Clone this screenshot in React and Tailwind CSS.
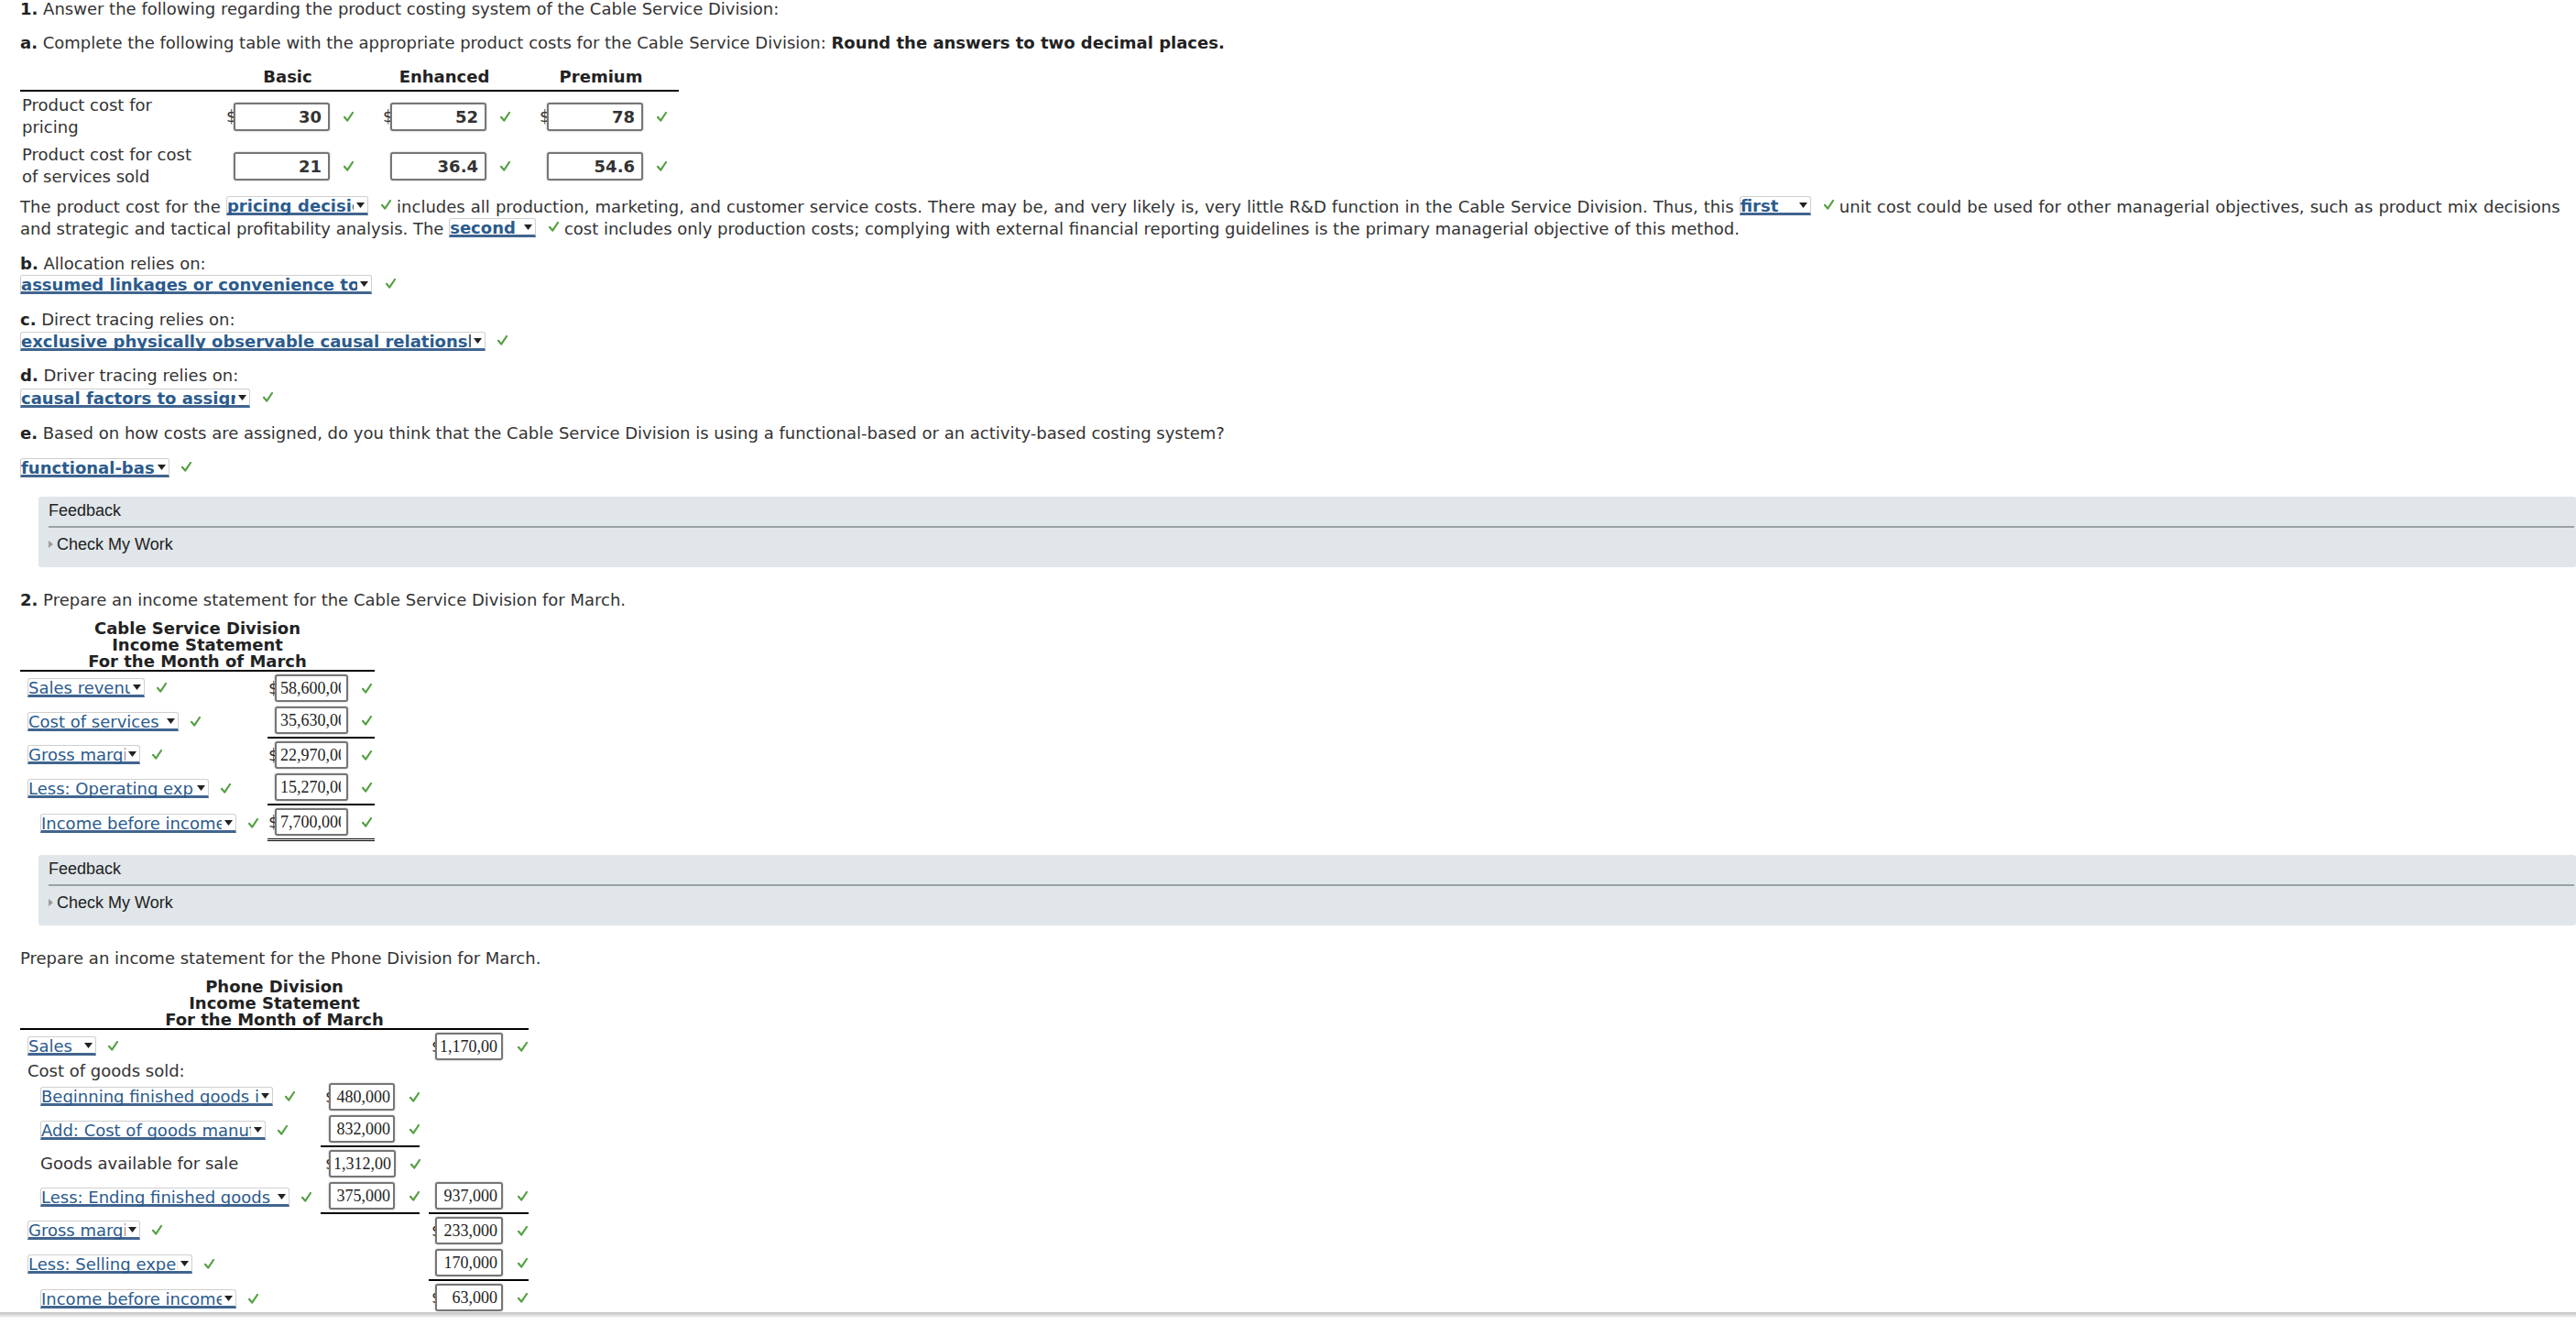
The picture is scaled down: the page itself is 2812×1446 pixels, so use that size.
import React from 'react';

const verdana = "font-['DejaVu_Sans',Verdana,sans-serif]";
const arial = "font-['Liberation_Sans',Arial,sans-serif]";
const times = "font-['Liberation_Serif','Times_New_Roman',serif]";

const Check = ({ className = '' }) => (
  <svg viewBox="0 0 11 11" className={`inline-block w-[11px] h-[11px] shrink-0 ${className}`}>
    <path d="M1 5.8 L4.2 9.6 L10 1" fill="none" stroke="#55a043" strokeWidth="2.2" strokeLinecap="round" strokeLinejoin="round" />
  </svg>
);

const Arrow = () => (
  <svg viewBox="0 0 9 6" className="w-[9px] h-[6px] mt-[6px] mx-[3px] shrink-0">
    <path d="M0 0 H9 L4.5 6 Z" fill="#222" />
  </svg>
);

// select-like answer box with blue underline
const Drop = ({ text, w, bold = false }) => (
  <span className={`inline-flex align-top h-[21px] ${w} border border-[#cfcfcf] border-b-[3px] border-b-[#41658f] rounded-t-[3px] bg-white`}>
    <span className={`flex-1 min-w-0 h-[20px] overflow-hidden whitespace-nowrap leading-[20px] text-[#2b5b8d] ${bold ? 'font-bold' : ''}`}>{text}</span>
    <Arrow />
  </span>
);

const Feedback = ({ className = '' }) => (
  <div className={`ml-[20px] rounded-[3px] bg-[#e0e6e9] pl-[11px] pr-[2px] pt-[5px] pb-[15px] ${arial} text-[18px] text-[#222] ${className}`}>
    <div className="leading-[20px] pb-[7px] border-b-2 border-[#9aa1a4]">Feedback</div>
    <div className="mt-[8px] leading-[20px] flex items-center">
      <svg viewBox="0 0 5 8" className="w-[5px] h-[8px] mr-[4px]">
        <path d="M0 0 L5 4 L0 8 Z" fill="#9a9a9a" />
      </svg>
      Check My Work
    </div>
  </div>
);

const CostBox = ({ value, dollar }) => (
  <div className="w-[171px] shrink-0 flex items-center">
    <span className="w-[8px]">{dollar ? '$' : ''}</span>
    <div className="relative w-[105px] h-[31px] border-2 border-[#767676] rounded-[3px] bg-white shadow-[0_0_2px_rgba(0,0,0,0.35)] text-right pr-[7px] font-bold leading-[27px]">
      {value}
    </div>
    <Check className="ml-[15px]" />
  </div>
);

const cable = { cw: 'w-[117px]', pl: 'pl-[1px]', ds: 'w-[7px]', bw: 'w-[80px]', ip: 'ml-[4px] mr-[6px]', cm: 'ml-[15px]' };
const phoneMid = { cw: 'w-[108px]', pl: 'pl-[5px]', ds: 'w-[4px]', bw: 'w-[73px]', ip: 'ml-[3px] mr-[3px]', cm: 'ml-[16px]' };
const phoneRight = { cw: 'w-[109px]', pl: 'pl-[3px]', ds: 'w-[4px]', bw: 'w-[74px]', ip: 'ml-[3px] mr-[4px]', cm: 'ml-[16px]' };

const Amt = ({ s, value, dollar, line }) => {
  let edge = 'pb-[2px]';
  if (line === 'single') edge = 'pb-[3px] border-b-2 border-black';
  if (line === 'double') edge = 'pb-[3px] border-b-[3px] border-double border-black';
  return (
    <div className={`${s.cw} ${s.pl} shrink-0 pt-[3px] ${edge}`}>
      {value ? (
        <div className="flex items-center">
          <span className={s.ds}>{dollar ? '$' : ''}</span>
          <div className={`relative ${s.bw} h-[30px] border-2 border-[#767676] rounded-[3px] bg-white shadow-[0_0_2px_rgba(0,0,0,0.35)]`}>
            <div className={`overflow-hidden whitespace-nowrap text-right ${times} text-[18px] leading-[26px] text-[#222] ${s.ip}`}>{value}</div>
          </div>
          <Check className={s.cm} />
        </div>
      ) : (
        <div className="h-[30px]" />
      )}
    </div>
  );
};

const Label = ({ w, indent, children }) => (
  <div className={`${w} shrink-0 flex items-center ${indent ? 'pl-[22px]' : 'pl-[8px]'}`}>{children}</div>
);

const DropCheck = ({ text, w }) => (
  <>
    <Drop text={text} w={w} />
    <Check className="ml-[13px]" />
  </>
);

const Title = ({ w, name }) => (
  <div className={`${w} border-b-2 border-black text-center font-bold leading-[18px] text-[#222]`}>
    <div>{name}</div>
    <div>Income Statement</div>
    <div>For the Month of March</div>
  </div>
);

export default function App() {
  return (
    <div className={`${verdana} text-[18px] leading-[24px] text-[#333] bg-white min-h-screen pl-[22px] pb-[60px]`}>
      <div className="-mt-[2px] whitespace-nowrap">
        <b className="text-[#222]">1.</b> Answer the following regarding the product costing system of the Cable Service Division:
      </div>
      <div className="mt-[13px] whitespace-nowrap">
        <b className="text-[#222]">a.</b> Complete the following table with the appropriate product costs for the Cable Service Division: <b className="text-[#222]">Round the answers to two decimal places.</b>
      </div>

      {/* product cost table */}
      <div className="w-[719px]">
        <div className="mt-[13px] flex pb-[2px] border-b-2 border-black font-bold text-[#222]">
          <div className="w-[225px] shrink-0" />
          <div className="w-[171px] shrink-0"><span className="block w-[134px] text-center">Basic</span></div>
          <div className="w-[171px] shrink-0"><span className="block w-[134px] text-center">Enhanced</span></div>
          <div className="w-[152px] shrink-0"><span className="block w-[134px] text-center">Premium</span></div>
        </div>
        <div className="flex items-center pt-[3px] pb-[3px]">
          <div className="w-[225px] shrink-0"><div className="w-[200px] pl-[2px]">Product cost for pricing</div></div>
          <CostBox value="30" dollar />
          <CostBox value="52" dollar />
          <CostBox value="78" dollar />
        </div>
        <div className="flex items-center pt-[3px] pb-[3px]">
          <div className="w-[225px] shrink-0"><div className="w-[200px] pl-[2px]">Product cost for cost of services sold</div></div>
          <CostBox value="21" />
          <CostBox value="36.4" />
          <CostBox value="54.6" />
        </div>
      </div>

      <div className="mt-[6px]">
        <div className="whitespace-nowrap [word-spacing:0.4px]">
          The product cost for the <Drop text="pricing decisions" w="w-[155px]" bold /><Check className="ml-[14px] align-[3px]" /> includes all production, marketing, and customer service costs. There may be, and very likely is, very little R&amp;D function in the Cable Service Division. Thus, this <Drop text="first" w="w-[78px]" bold /><Check className="ml-[14px] align-[3px]" /> unit cost could be used for other managerial objectives, such as product mix decisions
        </div>
        <div className="whitespace-nowrap">
          and strategic and tactical profitability analysis. The <Drop text="second" w="w-[95px]" bold /><Check className="ml-[14px] align-[3px]" /> cost includes only production costs; complying with external financial reporting guidelines is the primary managerial objective of this method.
        </div>
      </div>

      <div className="mt-[14px]"><b className="text-[#222]">b.</b> Allocation relies on:</div>
      <div className="whitespace-nowrap">
        <Drop text="assumed linkages or convenience to assign costs" w="w-[384px]" bold /><Check className="ml-[15px] align-[3px]" />
      </div>

      <div className="mt-[13px]"><b className="text-[#222]">c.</b> Direct tracing relies on:</div>
      <div className="mt-[1px] whitespace-nowrap">
        <Drop text="exclusive physically observable causal relationships" w="w-[508px]" bold /><Check className="ml-[13px] align-[3px]" />
      </div>

      <div className="mt-[12px]"><b className="text-[#222]">d.</b> Driver tracing relies on:</div>
      <div className="mt-[2px] whitespace-nowrap">
        <Drop text="causal factors to assign costs" w="w-[251px]" bold /><Check className="ml-[14px] align-[3px]" />
      </div>

      <div className="mt-[13px] whitespace-nowrap">
        <b className="text-[#222]">e.</b> Based on how costs are assigned, do you think that the Cable Service Division is using a functional-based or an activity-based costing system?
      </div>
      <div className="mt-[15px] whitespace-nowrap">
        <Drop text="functional-based" w="w-[163px]" bold /><Check className="ml-[13px] align-[3px]" />
      </div>

      <Feedback className="mt-[18px]" />

      <div className="mt-[24px] whitespace-nowrap">
        <b className="text-[#222]">2.</b> Prepare an income statement for the Cable Service Division for March.
      </div>

      {/* cable service income statement */}
      <div className="mt-[10px] w-[387px]">
        <Title w="w-[387px]" name="Cable Service Division" />
        <div className="flex">
          <Label w="w-[270px]"><DropCheck text="Sales revenue" w="w-[128px]" /></Label>
          <Amt s={cable} value="58,600,000" dollar />
        </div>
        <div className="flex">
          <Label w="w-[270px]"><DropCheck text="Cost of services" w="w-[165px]" /></Label>
          <Amt s={cable} value="35,630,000" line="single" />
        </div>
        <div className="flex">
          <Label w="w-[270px]"><DropCheck text="Gross margin" w="w-[123px]" /></Label>
          <Amt s={cable} value="22,970,000" dollar />
        </div>
        <div className="flex">
          <Label w="w-[270px]"><DropCheck text="Less: Operating expenses" w="w-[198px]" /></Label>
          <Amt s={cable} value="15,270,000" line="single" />
        </div>
        <div className="flex">
          <Label w="w-[270px]" indent><DropCheck text="Income before income taxes" w="w-[214px]" /></Label>
          <Amt s={cable} value="7,700,000" dollar line="double" />
        </div>
      </div>

      <Feedback className="mt-[15px]" />

      <div className="mt-[24px] whitespace-nowrap">Prepare an income statement for the Phone Division for March.</div>

      {/* phone division income statement */}
      <div className="mt-[10px] w-[555px]">
        <Title w="w-[555px]" name="Phone Division" />
        <div className="flex">
          <Label w="w-[328px]"><DropCheck text="Sales" w="w-[75px]" /></Label>
          <Amt s={phoneMid} />
          <div className="w-[10px] shrink-0" />
          <Amt s={phoneRight} value="1,170,000" dollar />
        </div>
        <div className="h-[20px] leading-[20px] pl-[8px]">Cost of goods sold:</div>
        <div className="flex">
          <Label w="w-[328px]" indent><DropCheck text="Beginning finished goods inventory" w="w-[254px]" /></Label>
          <Amt s={phoneMid} value="480,000" dollar />
        </div>
        <div className="flex">
          <Label w="w-[328px]" indent><DropCheck text="Add: Cost of goods manufactured" w="w-[246px]" /></Label>
          <Amt s={phoneMid} value="832,000" line="single" />
        </div>
        <div className="flex">
          <Label w="w-[328px]" indent>Goods available for sale</Label>
          <Amt s={phoneMid} value="1,312,000" dollar />
        </div>
        <div className="flex">
          <Label w="w-[328px]" indent><DropCheck text="Less: Ending finished goods inventory" w="w-[272px]" /></Label>
          <Amt s={phoneMid} value="375,000" line="single" />
          <div className="w-[10px] shrink-0" />
          <Amt s={phoneRight} value="937,000" line="single" />
        </div>
        <div className="flex">
          <Label w="w-[328px]"><DropCheck text="Gross margin" w="w-[123px]" /></Label>
          <Amt s={phoneMid} />
          <div className="w-[10px] shrink-0" />
          <Amt s={phoneRight} value="233,000" dollar />
        </div>
        <div className="flex">
          <Label w="w-[328px]"><DropCheck text="Less: Selling expenses" w="w-[180px]" /></Label>
          <Amt s={phoneMid} />
          <div className="w-[10px] shrink-0" />
          <Amt s={phoneRight} value="170,000" line="single" />
        </div>
        <div className="flex">
          <Label w="w-[328px]" indent><DropCheck text="Income before income taxes" w="w-[214px]" /></Label>
          <Amt s={phoneMid} />
          <div className="w-[10px] shrink-0" />
          <Amt s={phoneRight} value="63,000" dollar line="double" />
        </div>
      </div>

      {/* bottom bar of the viewer */}
      <div className="fixed bottom-0 left-0 right-0 h-[14px] bg-[linear-gradient(#c2c2c2,#ececec_5px,#ffffff_6px)]" />
    </div>
  );
}
